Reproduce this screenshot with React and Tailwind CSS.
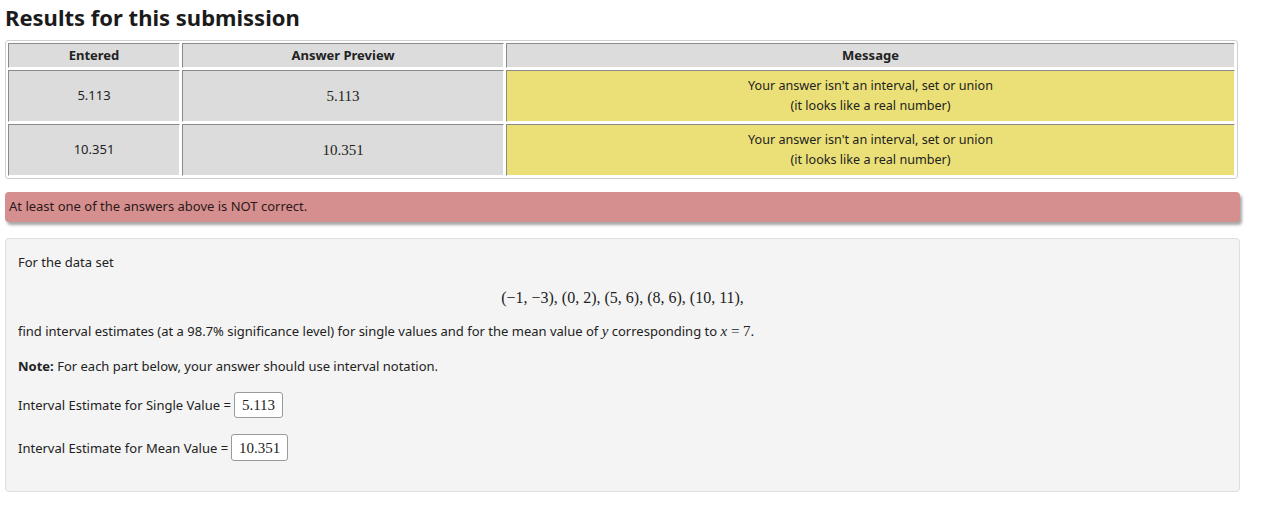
import React from "react";

const rows = [
  { entered: "5.113", preview: "5.113" },
  { entered: "10.351", preview: "10.351" },
];

const sans = "font-['Noto_Sans','Open_Sans',sans-serif]";
const serif = "font-['Liberation_Serif','DejaVu_Serif',serif]";

// inset borders like the old table border=1 look
const cell = "border border-t-[#8a8a8a] border-l-[#8a8a8a] border-b-white border-r-white";

const App = () => {
  return (
    <div className={`bg-white min-h-[513px] text-[#222] ${sans}`}>
      <div className="px-[5px] pt-[1px]">
        <h2 className="text-[22px] font-bold leading-[32px] text-[#1b1b1b]">
          Results for this submission
        </h2>

        {/* RESULTS TABLE */}
        <table className="mt-[7px] w-[1233px] border border-[#cfcfcf] rounded-[3px] border-separate border-spacing-[2px] text-[13px]">
          <thead>
            <tr>
              <th className={`${cell} bg-[#dcdcdc] h-[25px] w-[172px] font-bold`}>Entered</th>
              <th className={`${cell} bg-[#dcdcdc] h-[25px] w-[322px] font-bold`}>Answer Preview</th>
              <th className={`${cell} bg-[#dcdcdc] h-[25px] font-bold`}>Message</th>
            </tr>
          </thead>
          <tbody>
            {rows.map((row, i) => (
              <tr key={i}>
                <td className={`${cell} bg-[#dcdcdc] h-[52px] text-center`}>{row.entered}</td>
                <td className={`${cell} bg-[#dcdcdc] h-[52px] text-center ${serif} text-[15px]`}>
                  {row.preview}
                </td>
                <td className={`${cell} bg-[#ebe077] h-[52px] text-center leading-[20px] text-[12.6px]`}>
                  Your answer isn't an interval, set or union
                  <br />
                  (it looks like a real number)
                </td>
              </tr>
            ))}
          </tbody>
        </table>

        {/* ALERT */}
        <div className="mt-[13px] w-[1235px] h-[30px] flex items-center px-[4px] bg-[#d68f8f] rounded-[4px] shadow-[2px_3px_3px_rgba(0,0,0,0.35)] text-[13px] text-[#2a1a1a]">
          At least one of the answers above is NOT correct.
        </div>

        {/* PROBLEM */}
        <div className="mt-[16px] w-[1235px] h-[254px] bg-[#f4f4f4] border border-[#dedede] rounded-[4px] px-[12px] pt-[13px] text-[13px] text-[#222] leading-[20px]">
          <p>For the data set</p>
          <p className={`mt-[16px] text-center ${serif} text-[16px]`}>
            (−1, −3), (0, 2), (5, 6), (8, 6), (10, 11),
          </p>
          <p className="mt-[13px]">
            find interval estimates (at a 98.7% significance level) for single values and for the mean value of{" "}
            <span className={`${serif} italic text-[15px]`}>y</span> corresponding to{" "}
            <span className={`${serif} text-[15px]`}>
              <i>x</i> = 7.
            </span>
          </p>
          <p className="mt-[15px]">
            <b>Note:</b> For each part below, your answer should use interval notation.
          </p>
          <div className="mt-[16px] flex items-center gap-[3px]">
            <span>Interval Estimate for Single Value =</span>
            <span className={`h-[26px] px-[7px] flex items-center bg-white border border-[#9a9a9a] rounded-[3px] ${serif} text-[15px]`}>
              5.113
            </span>
          </div>
          <div className="mt-[16px] flex items-center gap-[3px]">
            <span>Interval Estimate for Mean Value =</span>
            <span className={`h-[27px] px-[7px] flex items-center bg-white border border-[#9a9a9a] rounded-[3px] ${serif} text-[15px]`}>
              10.351
            </span>
          </div>
        </div>
      </div>
    </div>
  );
};

export default App;
